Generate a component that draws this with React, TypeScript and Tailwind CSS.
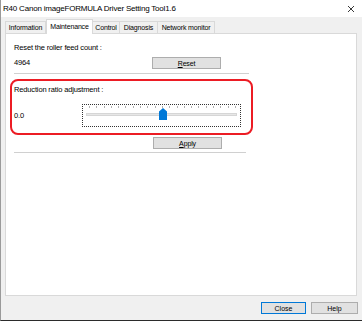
import React from 'react';

const font = { fontFamily: '"Liberation Sans", Arial, sans-serif' };

const tabs = [
    { label: 'Information', w: 'w-[41px]' },
    { label: 'Maintenance', w: 'w-[47px]', active: true },
    { label: 'Control', w: 'w-[28px]' },
    { label: 'Diagnosis', w: 'w-[39px]' },
    { label: 'Network monitor', w: 'w-[58px]' },
];

const WinButton: React.FC<{ children: React.ReactNode; primary?: boolean; className?: string }> = ({ children, primary, className }) => (
    <div
        className={`h-[12px] flex items-center justify-center bg-[#e1e1e1] border text-[7px] leading-none text-black ${primary ? 'border-[#0078d7]' : 'border-[#adadad]'} ${className ?? ''}`}
    >
        {children}
    </div>
);

const Slider: React.FC = () => {
    const ticks = Array.from({ length: 21 }, (_, i) => i);
    return (
        <div className="w-[159px] h-[23px] border border-dotted border-[#333] pl-[3px] pr-[3px] flex flex-col">
            {/* tick marks */}
            <div className="flex justify-between pl-[3px] pr-[1px] mt-[1px] h-[3px]">
                {ticks.map(t => (
                    <div key={t} className="w-px h-[2px] bg-[#b4b4b4]" />
                ))}
            </div>
            {/* track + thumb */}
            <div className="relative mt-[4px] h-[3px] bg-[#e7e7e7] border border-[#d6d6d6]">
                <svg
                    width="8"
                    height="12"
                    viewBox="0 0 8 12"
                    className="absolute left-[72px] top-[-6px]"
                >
                    <path d="M0 3.5 L4 0 L8 3.5 V12 H0 Z" fill="#0078d7" />
                </svg>
            </div>
        </div>
    );
};

const App: React.FC = () => {
    return (
        <div style={font} className="w-[362px] h-[321px] bg-[#f0f0f0] flex flex-col border-l border-l-[#9a9a9a] border-b border-b-[#2b2b2b] overflow-hidden">
            {/* Title bar */}
            <div className="h-[17px] bg-white flex items-center justify-between pl-[2px] pr-[8px] shrink-0">
                <span className="text-[8px] leading-none tracking-[-0.2px] text-black">
                    R40 Canon imageFORMULA Driver Setting Tool1.6
                </span>
                <svg width="6" height="6" viewBox="0 0 6 6">
                    <path d="M0 0 L6 6 M6 0 L0 6" stroke="#222" strokeWidth="0.9" />
                </svg>
            </div>

            {/* Tabs */}
            <div className="flex items-end pl-[4px] pt-[2px] h-[16px] shrink-0 relative z-10">
                {tabs.map(tab => (
                    <div
                        key={tab.label}
                        className={`${tab.w} flex items-center justify-center text-[7px] leading-none tracking-[-0.15px] text-black border-t border-l border-r border-[#d9d9d9] ${
                            tab.active ? 'h-[15px] bg-white -mb-px pb-[2px]' : 'h-[12px] bg-[#f0f0f0] -ml-px first:ml-0'
                        }`}
                    >
                        {tab.label}
                    </div>
                ))}
            </div>

            {/* Panel */}
            <div className="flex-1 mx-[4px] mr-[5px] bg-white border border-[#d9d9d9] pl-[8px] pt-[10px] text-[7.5px] leading-[8px] tracking-[-0.15px] text-black">
                <div>Reset the roller feed count :</div>
                <div className="flex items-center h-[12px] mt-[5px]">
                    <span className="w-[138px]">4964</span>
                    <WinButton className="w-[69px]">
                        <span><span className="underline">R</span>eset</span>
                    </WinButton>
                </div>
                <div className="w-[235px] h-px bg-[#d0d0d0] mt-[4px]" />

                {/* highlighted group */}
                <div className="-ml-[4px] mt-[5px] w-[243px] h-[56px] border-2 border-[#ec1c24] rounded-[8px] pl-[2px] pt-[5px]">
                    <div>Reduction ratio adjustment :</div>
                    <div className="flex items-center mt-[10px]">
                        <span className="w-[68px]">0.0</span>
                        <Slider />
                    </div>
                </div>

                <div className="ml-[139px] mt-[2px]">
                    <WinButton className="w-[69px]">
                        <span><span className="underline">A</span>pply</span>
                    </WinButton>
                </div>
                <div className="w-[232px] h-px bg-[#d0d0d0] mt-[3px]" />
            </div>

            {/* Footer */}
            <div className="flex justify-end gap-[5px] pr-[4px] pt-[6px] pb-[6px] shrink-0">
                <WinButton primary className="w-[45px]">Close</WinButton>
                <WinButton className="w-[47px]">Help</WinButton>
            </div>
        </div>
    );
};

export default App;
